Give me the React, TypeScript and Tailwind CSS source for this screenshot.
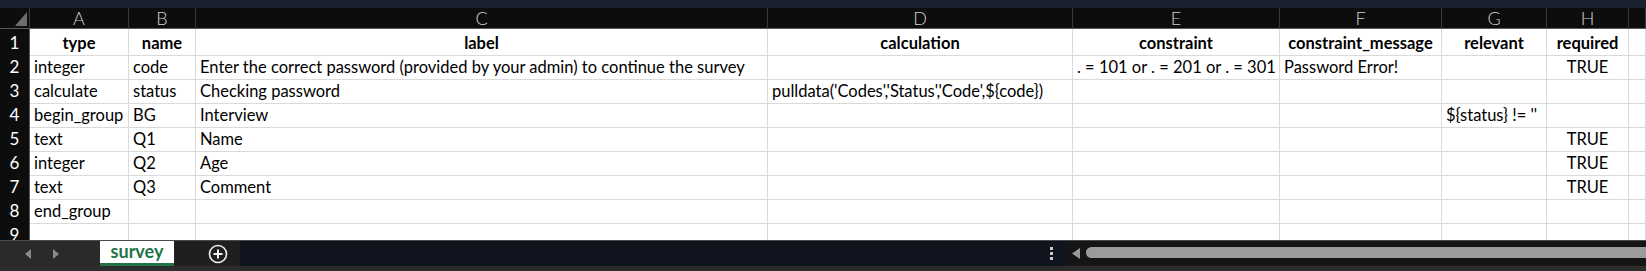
import React from 'react';

const cols = ['A', 'B', 'C', 'D', 'E', 'F', 'G', 'H', ''];

const rows: (string | { v: string; c?: boolean; b?: boolean })[][] = [
  [
    { v: 'type', b: true, c: true },
    { v: 'name', b: true, c: true },
    { v: 'label', b: true, c: true },
    { v: 'calculation', b: true, c: true },
    { v: 'constraint', b: true, c: true },
    { v: 'constraint_message', b: true, c: true },
    { v: 'relevant', b: true, c: true },
    { v: 'required', b: true, c: true },
    '',
  ],
  [
    'integer',
    'code',
    'Enter the correct password (provided by your admin) to continue the survey',
    '',
    '. = 101 or . = 201 or . = 301',
    'Password Error!',
    '',
    { v: 'TRUE', c: true },
    '',
  ],
  ['calculate', 'status', 'Checking password', "pulldata('Codes','Status','Code',${code})", '', '', '', '', ''],
  ['begin_group', 'BG', 'Interview', '', '', '', "${status} != ''", '', ''],
  ['text', 'Q1', 'Name', '', '', '', '', { v: 'TRUE', c: true }, ''],
  ['integer', 'Q2', 'Age', '', '', '', '', { v: 'TRUE', c: true }, ''],
  ['text', 'Q3', 'Comment', '', '', '', '', { v: 'TRUE', c: true }, ''],
  ['end_group', '', '', '', '', '', '', '', ''],
  ['', '', '', '', '', '', '', '', ''],
];

const gridCols = 'grid grid-cols-[30px_99px_67px_572px_305px_207px_162px_105px_82px_1fr]';

export default function App() {
  return (
    <div
      className="w-[1646px] h-[271px] overflow-hidden bg-white flex flex-col"
      style={{ fontFamily: 'Lato, "Liberation Sans", sans-serif' }}
    >
      {/* window strip */}
      <div className="h-[8px] bg-[#1b2130] shrink-0" />

      {/* column headers */}
      <div className={`${gridCols} h-[21px] bg-[#0d0d0d] border-b border-[#5a5a5a] shrink-0`}>
        <div className="relative border-r border-[#3a3a3a]">
          <svg className="absolute left-[15px] top-[4px]" width="12" height="14" viewBox="0 0 12 14">
            <polygon points="12,0 12,14 0,14" fill="#6e6e6e" />
          </svg>
        </div>
        {cols.map((c, i) => (
          <div
            key={i}
            className="flex items-center justify-center border-r border-[#3a3a3a] text-[18px] leading-none text-[#d0d0d0] font-light"
          >
            {c}
          </div>
        ))}
      </div>

      {/* rows */}
      <div className="flex-1 overflow-hidden">
        {rows.map((r, ri) => (
          <div key={ri} className={`${gridCols} h-[24px]`}>
            <div className="bg-[#0d0d0d] border-r border-[#5a5a5a] flex items-center justify-center pt-[1px] text-[17px] text-white">
              {ri + 1}
            </div>
            {r.map((cell, ci) => {
              const v = typeof cell === 'string' ? cell : cell.v;
              const centered = typeof cell !== 'string' && cell.c;
              const bold = typeof cell !== 'string' && cell.b;
              return (
                <div
                  key={ci}
                  className={`border-r border-b border-[#dadada] flex items-center pt-[2px] px-[4px] text-[16.5px] leading-none text-black whitespace-nowrap overflow-visible ${
                    centered ? 'justify-center' : ''
                  } ${bold ? 'font-bold' : ''}`}
                >
                  {v}
                </div>
              );
            })}
          </div>
        ))}
      </div>

      {/* sheet tabs bar */}
      <div className="h-[26px] shrink-0 flex items-stretch border-t border-[#4a4a4a] bg-[#10141f]">
        <div className="w-[100px] bg-[#2a2a2a] flex items-center gap-[22px] pl-[25px]">
          <svg width="6" height="10" viewBox="0 0 6 10">
            <polygon points="6,0 6,10 0,5" fill="#8a8a8a" />
          </svg>
          <svg width="6" height="10" viewBox="0 0 6 10">
            <polygon points="0,0 0,10 6,5" fill="#8a8a8a" />
          </svg>
        </div>
        <div className="w-[74px] bg-white border-b-[3px] border-[#217346] flex items-center justify-center text-[18px] font-bold text-[#217346] leading-none pb-[2px]">
          survey
        </div>
        <div className="w-[66px] bg-[#1f1f1f] flex items-center pl-[34px]">
          <svg width="20" height="20" viewBox="0 0 20 20">
            <circle cx="10" cy="10" r="8.5" fill="none" stroke="#f0f0f0" strokeWidth="1.6" />
            <path d="M10 5.5v9M5.5 10h9" stroke="#f0f0f0" strokeWidth="2" />
          </svg>
        </div>
        <div className="w-[827px] flex items-center justify-end pr-[14px]">
          <div className="flex flex-col gap-[2px]">
            <span className="w-[3px] h-[3px] bg-[#c8c8c8]" />
            <span className="w-[3px] h-[3px] bg-[#c8c8c8]" />
            <span className="w-[3px] h-[3px] bg-[#c8c8c8]" />
          </div>
        </div>
        <div className="flex-1 bg-[#151515] flex items-center pl-[5px] gap-[6px]">
          <svg width="8" height="11" viewBox="0 0 8 11">
            <polygon points="8,0 8,11 0,5.5" fill="#9a9a9a" />
          </svg>
          <div className="flex-1 h-[11px] bg-[#9b9b9b] rounded-l-full -mt-[2px]" />
        </div>
      </div>
      <div className="h-[5px] shrink-0 bg-[#2c2c2c]" />
    </div>
  );
}
